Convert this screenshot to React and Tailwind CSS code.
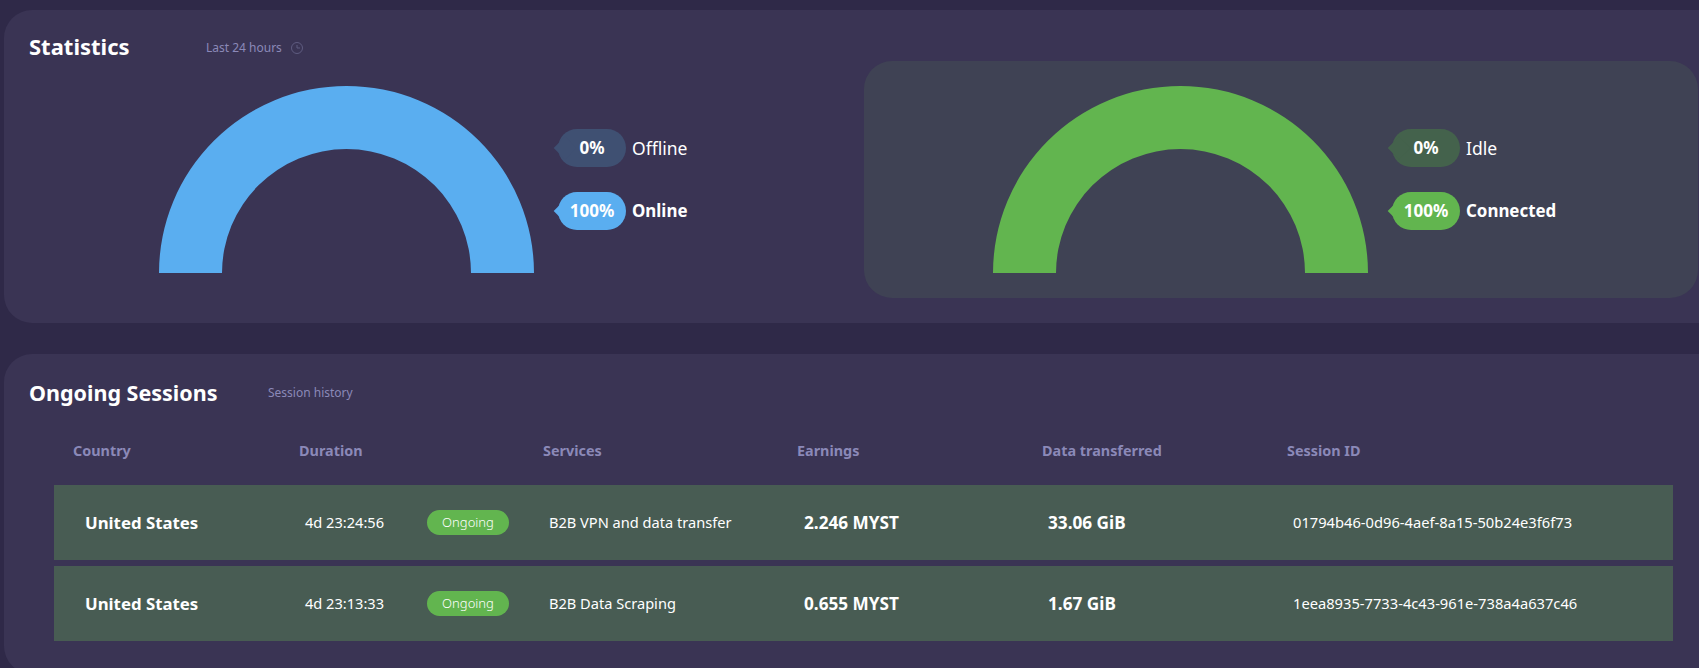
import React from 'react';

const font = { fontFamily: '"Noto Sans", sans-serif' };

const columns = 'grid grid-cols-[245px_244px_254px_245px_245px_1fr]';

const sessions = [
  {
    country: 'United States',
    duration: '4d 23:24:56',
    service: 'B2B VPN and data transfer',
    earnings: '2.246 MYST',
    data: '33.06 GiB',
    id: '01794b46-0d96-4aef-8a15-50b24e3f6f73',
  },
  {
    country: 'United States',
    duration: '4d 23:13:33',
    service: 'B2B Data Scraping',
    earnings: '0.655 MYST',
    data: '1.67 GiB',
    id: '1eea8935-7733-4c43-961e-738a4a637c46',
  },
];

function Gauge({ color }) {
  return (
    <svg width="375" height="188" viewBox="0 0 375 188" className="shrink-0">
      <path d="M0 188 A187.5 187 0 0 1 375 188 H312 A124.5 124 0 0 0 63 188 Z" fill={color} />
    </svg>
  );
}

function Badge({ value, label, bg, arrow, bold }) {
  return (
    <div className="flex items-center gap-[6px]">
      <div className={`relative h-[38px] w-[68px] rounded-full flex items-center justify-center ${bg}`}>
        <span className={`absolute left-[-1px] top-[11px] w-[16px] h-[16px] rotate-45 ${arrow}`} />
        <span className="relative text-[17px] font-bold text-white">{value}</span>
      </div>
      <span className={`text-white ${bold ? 'text-[16.9px] font-bold' : 'text-[17.5px] font-normal'}`}>{label}</span>
    </div>
  );
}

function StatPanel({ color, highlighted, items }) {
  return (
    <div className={`w-[834px] h-[237px] flex pl-[129px] pt-[24px] rounded-[28px] ${highlighted ? 'bg-[#3f4254]' : ''}`}>
      <Gauge color={color} />
      <div className="ml-[24px] mt-[44px] flex flex-col gap-[25px]">
        {items.map((item) => (
          <Badge key={item.label} {...item} />
        ))}
      </div>
    </div>
  );
}

export default function App() {
  return (
    <div style={font} className="h-[668px] overflow-hidden bg-[#2f2948] pl-1 pt-[10px] antialiased">
      {/* Statistics */}
      <div className="h-[313px] rounded-l-[28px] bg-[#3a3454] pt-[26px]">
        <div className="flex items-center h-[24px] pl-[25px]">
          <h2 className="w-[177px] mb-[3px] text-[22px] font-bold text-white">Statistics</h2>
          <span className="text-[12px] text-[#8b89b8]">Last 24 hours</span>
          <svg width="12" height="12" viewBox="0 0 12 12" fill="none" stroke="#5f5c80" strokeWidth="1" className="ml-[9px]">
            <circle cx="6" cy="6" r="5.5" />
            <path d="M6 3 V6 H9" />
          </svg>
        </div>
        <div className="flex pl-[26px] mt-[1px]">
          <StatPanel
            color="#5aaef0"
            items={[
              { value: '0%', label: 'Offline', bg: 'bg-[#3f5072]', arrow: 'bg-[#3f5072]' },
              { value: '100%', label: 'Online', bg: 'bg-[#5aaef0]', arrow: 'bg-[#5aaef0]', bold: true },
            ]}
          />
          <StatPanel
            color="#62b54f"
            highlighted
            items={[
              { value: '0%', label: 'Idle', bg: 'bg-[#44624c]', arrow: 'bg-[#44624c]' },
              { value: '100%', label: 'Connected', bg: 'bg-[#62b54f]', arrow: 'bg-[#62b54f]', bold: true },
            ]}
          />
        </div>
      </div>

      {/* Ongoing Sessions */}
      <div className="mt-[31px] h-[320px] rounded-l-[28px] bg-[#3a3454] pt-[24px]">
        <div className="flex items-center h-[30px] pl-[25px]">
          <h2 className="w-[239px] text-[21.5px] font-bold text-white">Ongoing Sessions</h2>
          <span className="text-[12px] text-[#8b89b8]">Session history</span>
        </div>
        <div className="ml-[50px] w-[1619px]">
          <div className={`${columns} h-[36px] mt-[25px] items-center text-[14.4px] font-bold text-[#8b89b8]`}>
            <div className="pl-[19px]">Country</div>
            <div>Duration</div>
            <div>Services</div>
            <div>Earnings</div>
            <div>Data transferred</div>
            <div>Session ID</div>
          </div>
          <div className="mt-[16px] flex flex-col gap-[6px]">
            {sessions.map((s) => (
              <div key={s.id} className={`${columns} h-[75px] items-center bg-[#485c53] text-white`}>
                <div className="pl-[31px] text-[16.8px] font-bold">{s.country}</div>
                <div className="flex items-center pl-[6px]">
                  <span className="w-[122px] text-[14.6px]">{s.duration}</span>
                  <span className="h-[25px] w-[82px] rounded-full bg-[#62b54f] flex items-center justify-center text-[13px] font-light">
                    Ongoing
                  </span>
                </div>
                <div className="pl-[6px] text-[14.6px]">{s.service}</div>
                <div className="pl-[7px] text-[17.2px] font-bold">{s.earnings}</div>
                <div className="pl-[6px] text-[17.2px] font-bold">{s.data}</div>
                <div className="pl-[6px] text-[14.7px]">{s.id}</div>
              </div>
            ))}
          </div>
        </div>
      </div>
    </div>
  );
}
